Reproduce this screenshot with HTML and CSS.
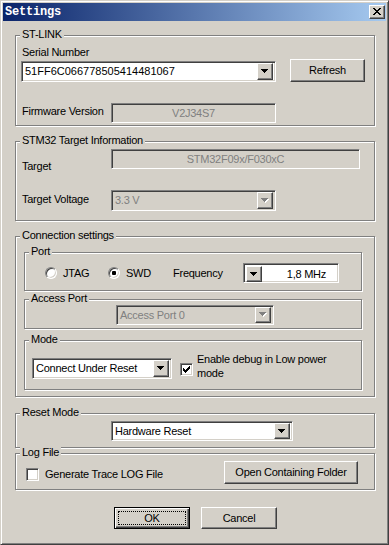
FILE: index.html
```html
<!DOCTYPE html>
<html lang="en">
<head>
<meta charset="UTF-8">
<meta name="viewport" content="width=device-width, initial-scale=1.0">
<title>Settings</title>
<link rel="stylesheet" href="styles.css">
</head>
<body>
<div class="window">
    <div class="titlebar">
        <span class="title">Settings</span>
        <button class="close-btn raised">
            <svg width="8" height="7" viewBox="0 0 8 7"><path d="M0 0h2v1h-2zM6 0h2v1h-2zM1 1h2v1h-2zM5 1h2v1h-2zM2 2h4v1h-4zM3 3h2v1h-2zM2 4h4v1h-4zM1 5h2v1h-2zM5 5h2v1h-2zM0 6h2v1h-2zM6 6h2v1h-2z"/></svg>
        </button>
    </div>

    <div class="content">
        <!-- ST-LINK -->
        <div class="group stlink">
            <span class="legend">ST-LINK</span>
            <div class="label serial-label">Serial Number</div>
            <div class="row serial-row">
                <div class="combo sunken serial-combo">
                    <span class="combo-text digits">51FF6C066778505414481067</span>
                    <span class="drop raised"><svg width="7" height="4" viewBox="0 0 7 4"><path d="M0 0h7v1h-1v1h-1v1h-1v1h-1v-1h-1v-1h-1v-1h-1z"/></svg></span>
                </div>
                <button class="btn raised refresh-btn">Refresh</button>
            </div>
            <div class="row fw-row">
                <span class="label side-label fw-label">Firmware Version</span>
                <div class="field sunken disabled fw-field">V2J34S7</div>
            </div>
        </div>

        <!-- Target info -->
        <div class="group target">
            <span class="legend">STM32 Target Information</span>
            <div class="row target-row">
                <span class="label side-label target-label">Target</span>
                <div class="field sunken disabled target-field">STM32F09x/F030xC</div>
            </div>
            <div class="row voltage-row">
                <span class="label side-label voltage-label">Target Voltage</span>
                <div class="combo sunken disabled voltage-combo">
                    <span class="combo-text">3.3 V</span>
                    <span class="drop raised"><svg width="8" height="5" viewBox="0 0 8 5"><path fill="#fff" d="M1 1h7v1h-1v1h-1v1h-1v1h-1v-1h-1v-1h-1v-1h-1z"/><path fill="#808080" d="M0 0h7v1h-1v1h-1v1h-1v1h-1v-1h-1v-1h-1v-1h-1z"/></svg></span>
                </div>
            </div>
        </div>

        <!-- Connection -->
        <div class="group connection">
            <span class="legend">Connection settings</span>

            <div class="group sub port">
                <span class="legend">Port</span>
                <div class="row port-row">
                    <span class="radio-item jtag"><span class="radio sunken"></span>JTAG</span>
                    <span class="radio-item swd"><span class="radio sunken checked"></span>SWD</span>
                    <span class="label freq-label">Frequency</span>
                    <div class="freq sunken">
                        <span class="drop raised"><svg width="7" height="4" viewBox="0 0 7 4"><path d="M0 0h7v1h-1v1h-1v1h-1v1h-1v-1h-1v-1h-1v-1h-1z"/></svg></span>
                        <span class="freq-text">1,8 MHz</span>
                    </div>
                </div>
            </div>

            <div class="group sub access">
                <span class="legend">Access Port</span>
                <div class="combo sunken disabled access-combo">
                    <span class="combo-text">Access Port 0</span>
                    <span class="drop raised"><svg width="8" height="5" viewBox="0 0 8 5"><path fill="#fff" d="M1 1h7v1h-1v1h-1v1h-1v1h-1v-1h-1v-1h-1v-1h-1z"/><path fill="#808080" d="M0 0h7v1h-1v1h-1v1h-1v1h-1v-1h-1v-1h-1v-1h-1z"/></svg></span>
                </div>
            </div>

            <div class="group sub mode">
                <span class="legend">Mode</span>
                <div class="row mode-row">
                    <div class="combo sunken mode-combo">
                        <span class="combo-text">Connect Under Reset</span>
                        <span class="drop raised"><svg width="7" height="4" viewBox="0 0 7 4"><path d="M0 0h7v1h-1v1h-1v1h-1v1h-1v-1h-1v-1h-1v-1h-1z"/></svg></span>
                    </div>
                    <span class="check sunken lowpower-check"><svg width="7" height="7" viewBox="0 0 7 7"><path d="M6 0h1v1h-1zM5 1h2v1h-2zM0 2h1v1h-1zM4 2h3v1h-3zM0 3h2v1h-2zM3 3h3v1h-3zM0 4h5v1h-5zM1 5h3v1h-3zM2 6h1v1h-1z"/></svg></span>
                    <span class="label lowpower-label">Enable debug in Low power mode</span>
                </div>
            </div>
        </div>

        <!-- Reset mode -->
        <div class="group reset">
            <span class="legend">Reset Mode</span>
            <div class="combo sunken reset-combo">
                <span class="combo-text">Hardware Reset</span>
                <span class="drop raised"><svg width="7" height="4" viewBox="0 0 7 4"><path d="M0 0h7v1h-1v1h-1v1h-1v1h-1v-1h-1v-1h-1v-1h-1z"/></svg></span>
            </div>
        </div>

        <!-- Log file -->
        <div class="group log">
            <span class="legend">Log File</span>
            <div class="row log-row">
                <span class="check sunken log-check"></span>
                <span class="label log-label">Generate Trace LOG File</span>
                <button class="btn raised folder-btn">Open Containing Folder</button>
            </div>
        </div>

        <div class="row dialog-buttons">
            <button class="btn default ok-btn"><span class="focus">OK</span></button>
            <button class="btn raised cancel-btn">Cancel</button>
        </div>
    </div>
</div>
</body>
</html>
```

FILE: styles.css
```css
* {
    box-sizing: border-box;
}
body {
    margin: 0;
    background-color: #d4d0c8;
    font-family: "Liberation Sans", Arial, sans-serif;
    font-size: 11px;
    line-height: 13px;
    letter-spacing: -0.25px;
    color: #000;
}
button {
    font: inherit;
    letter-spacing: inherit;
    color: #000;
    padding: 0;
    margin: 0;
}

/* classic 3d edges */
.raised {
    background-color: #d4d0c8;
    border: 1px solid;
    border-color: #fff #404040 #404040 #fff;
    box-shadow: inset -1px -1px #808080;
}
.sunken {
    background-color: #fff;
    border: 1px solid;
    border-color: #808080 #fff #fff #808080;
    box-shadow: inset 1px 1px #404040, inset -1px -1px #d4d0c8;
}

.window {
    width: 389px;
    height: 545px;
    border: 1px solid;
    border-color: #d4d0c8 #404040 #404040 #d4d0c8;
    box-shadow: inset 1px 1px #fff, inset -1px -1px #808080;
    padding: 2px;
}
.titlebar {
    height: 18px;
    display: flex;
    align-items: center;
    justify-content: space-between;
    padding: 0 1px 0 2px;
    background: linear-gradient(to right, #0a246a, #a6caf0);
}
.title {
    color: #fff;
    font-family: "Liberation Mono", "DejaVu Sans Mono", monospace;
    font-weight: bold;
    font-size: 12px;
    letter-spacing: -0.2px;
}
.close-btn {
    width: 16px;
    height: 14px;
    display: flex;
    align-items: center;
    justify-content: center;
    padding: 0 1px 1px 0;
}

.content {
    padding: 14px 0 0 12px;
}

/* group boxes */
.group {
    position: relative;
    width: 360px;
    border: 1px solid #808080;
    box-shadow: inset 1px 1px #fff, 1px 1px #fff;
}
.legend {
    position: absolute;
    top: -8px;
    left: 4px;
    padding: 0 2px;
    background-color: #d4d0c8;
    white-space: nowrap;
}
.sub {
    width: 338px;
    margin-left: 8px;
}
.row {
    display: flex;
    align-items: flex-start;
}
.label {
    white-space: nowrap;
}
.side-label {
    width: 89px;
    margin-left: 1px;
}

/* combos & fields */
.combo {
    display: flex;
    align-items: center;
    height: 21px;
    padding: 2px;
}
.combo-text {
    flex: 1;
    padding-left: 1px;
    white-space: nowrap;
    overflow: hidden;
}
.digits {
    letter-spacing: 0;
}
.drop {
    width: 16px;
    height: 17px;
    display: flex;
    align-items: center;
    justify-content: center;
    padding: 0 1px 1px 0;
}
.disabled {
    background-color: #d4d0c8;
    color: #808080;
}
.field {
    height: 20px;
    display: flex;
    align-items: center;
    justify-content: center;
}

/* ST-LINK */
.stlink {
    height: 91px;
    padding-left: 5px;
}
.serial-label {
    margin: 10px 0 0 1px;
}
.serial-combo {
    width: 255px;
    margin-top: 2px;
}
.refresh-btn {
    width: 75px;
    height: 23px;
    margin-left: 14px;
}
.fw-row {
    margin-top: 21px;
}
.fw-label {
    margin-top: 2px;
}
.fw-field {
    width: 165px;
}

/* target information */
.target {
    height: 80px;
    margin-top: 15px;
    padding-left: 5px;
}
.target-row {
    margin-top: 7px;
}
.target-label {
    margin-top: 11px;
}
.target-field {
    width: 249px;
}
.voltage-row {
    margin-top: 17px;
}
.voltage-label {
    margin-top: 3px;
}
.voltage-combo {
    width: 165px;
}

/* connection */
.connection {
    height: 161px;
    margin-top: 15px;
}
.port {
    height: 39px;
    margin-top: 15px;
}
.port-row {
    align-items: center;
    height: 20px;
    margin: 10px 0 0 20px;
}
.radio-item {
    display: flex;
    align-items: center;
}
.jtag {
    width: 63px;
}
.swd {
    width: 65px;
}
.radio {
    width: 12px;
    height: 12px;
    border-radius: 50%;
    margin-right: 6px;
    position: relative;
}
.radio.checked::after {
    content: "";
    position: absolute;
    left: 3px;
    top: 3px;
    width: 4px;
    height: 4px;
    border-radius: 1px;
    background-color: #000;
}
.freq-label {
    width: 70px;
}
.freq {
    width: 96px;
    height: 20px;
    display: flex;
    padding: 2px;
}
.freq .drop {
    height: 16px;
}
.freq-text {
    flex: 1;
    text-align: right;
    padding-right: 10px;
    line-height: 16px;
}

.access {
    height: 30px;
    margin-top: 8px;
}
.access-combo {
    width: 158px;
    height: 20px;
    margin: 5px 0 0 91px;
}
.access-combo .drop {
    height: 16px;
}

.mode {
    height: 50px;
    margin-top: 11px;
}
.mode-row {
    margin: 11px 0 0 7px;
}
.mode-combo {
    width: 140px;
    margin-top: 6px;
}
.check {
    width: 13px;
    height: 13px;
    display: flex;
    align-items: center;
    justify-content: center;
    flex-shrink: 0;
}
.lowpower-check {
    margin: 11px 0 0 8px;
}
.lowpower-label {
    white-space: normal;
    width: 140px;
    line-height: 14px;
    margin-left: 4px;
}

/* reset mode */
.reset {
    height: 35px;
    margin-top: 16px;
}
.reset-combo {
    width: 182px;
    height: 20px;
    margin: 7px 0 0 95px;
}
.reset-combo .drop {
    height: 16px;
}

/* log file */
.log {
    height: 37px;
    margin-top: 5px;
}
.log-row {
    margin-top: 7px;
}
.log-check {
    margin: 7px 0 0 10px;
}
.log-label {
    margin: 7px 0 0 6px;
}
.folder-btn {
    width: 134px;
    height: 23px;
    margin: 0 16px 0 auto;
}

/* ok / cancel */
.dialog-buttons {
    margin-top: 17px;
}
.btn {
    text-align: center;
}
.ok-btn,
.cancel-btn {
    width: 76px;
    height: 22px;
}
.ok-btn {
    margin-left: 99px;
    background-color: #d4d0c8;
    border: 1px solid #000;
    box-shadow: inset 1px 1px #fff, inset -1px -1px #404040, inset -2px -2px #808080;
    padding: 3px;
}
.focus {
    display: flex;
    align-items: center;
    justify-content: center;
    height: 100%;
    border: 1px dotted #000;
}
.cancel-btn {
    margin-left: 11px;
}
```
